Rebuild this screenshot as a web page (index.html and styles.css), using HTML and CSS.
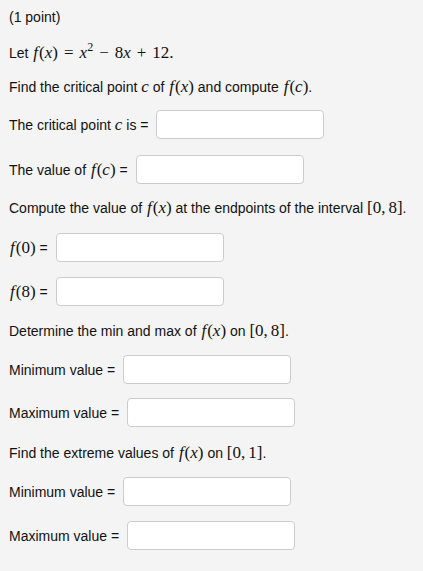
FILE: index.html
```html
<!DOCTYPE html>
<html>
<head>
<meta charset="utf-8">
<link rel="stylesheet" href="styles.css">
</head>
<body>
<div class="problem">
  <p class="txt">(1 point)</p>
  <p class="txt">Let <span class="m"><i class="f">f</i>(<i>x</i>)<span class="op">=</span><i>x</i><sup>2</sup><span class="op">−</span>8<i>x</i><span class="op">+</span>12.</span></p>
  <p class="txt">Find the critical point <span class="m"><i>c</i></span> of <span class="m"><i class="f">f</i>(<i>x</i>)</span> and compute <span class="m"><i class="f">f</i>(<i>c</i>)</span>.</p>
  <div class="row"><span class="lbl">The critical point <span class="m"><i>c</i></span> is =</span><span class="box"></span></div>
  <div class="row"><span class="lbl">The value of <span class="m"><i class="f">f</i>(<i>c</i>)</span> =</span><span class="box"></span></div>
  <p class="txt">Compute the value of <span class="m"><i class="f">f</i>(<i>x</i>)</span> at the endpoints of the interval <span class="m">[0,<span class="sp"></span>8]</span>.</p>
  <div class="row"><span class="lbl"><span class="m"><i class="f">f</i>(0)</span> =</span><span class="box"></span></div>
  <div class="row"><span class="lbl"><span class="m"><i class="f">f</i>(8)</span> =</span><span class="box"></span></div>
  <p class="txt">Determine the min and max of <span class="m"><i class="f">f</i>(<i>x</i>)</span> on <span class="m">[0,<span class="sp"></span>8]</span>.</p>
  <div class="row"><span class="lbl">Minimum value =</span><span class="box"></span></div>
  <div class="row"><span class="lbl">Maximum value =</span><span class="box"></span></div>
  <p class="txt">Find the extreme values of <span class="m"><i class="f">f</i>(<i>x</i>)</span> on <span class="m">[0,<span class="sp"></span>1]</span>.</p>
  <div class="row"><span class="lbl">Minimum value =</span><span class="box"></span></div>
  <div class="row"><span class="lbl">Maximum value =</span><span class="box"></span></div>
</div>
</body>
</html>
```
FILE: styles.css
```css
html, body {
  margin: 0;
  padding: 0;
  background: #f4f4f4;
}
body {
  font-family: "Liberation Sans", Arial, sans-serif;
  font-size: 14px;
  color: #111;
}
.problem {
  display: flex;
  flex-direction: column;
  align-items: flex-start;
  padding: 7px 9px 0 9px;
}
.txt {
  margin: 15px 0 0 0;
  height: 20px;
  line-height: 20px;
  white-space: nowrap;
}
.row {
  margin-top: 14px;
  height: 29px;
  display: flex;
  align-items: center;
  gap: 8px;
}
.problem > :nth-child(1) { margin-top: 0; }
.problem > :nth-child(2) { margin-top: 16px; }
.problem > :nth-child(3) { margin-top: 14px; }
.problem > :nth-child(4) { margin-top: 13px; }
.problem > :nth-child(5) { margin-top: 16px; }
.problem > :nth-child(6) { margin-top: 14px; }
.problem > :nth-child(7) { margin-top: 15px; }
.problem > :nth-child(8) { margin-top: 15px; }
.problem > :nth-child(9) { margin-top: 15px; }
.problem > :nth-child(10) { margin-top: 14px; }
.problem > :nth-child(11) { margin-top: 14px; }
.problem > :nth-child(12) { margin-top: 16px; }
.problem > :nth-child(13) { margin-top: 14px; }
.problem > :nth-child(14) { margin-top: 15px; }
.lbl {
  white-space: nowrap;
  line-height: 20px;
}
.box {
  display: block;
  width: 166px;
  height: 27px;
  background: #fff;
  border: 1px solid #cccccc;
  border-radius: 4px;
}
.m {
  font-family: "Liberation Serif", "Times New Roman", serif;
  font-size: 17px;
}
.m i {
  font-style: italic;
}
.m i.f {
  padding: 0 1px 0 1px;
}
.m sup {
  font-size: 12px;
  vertical-align: 7px;
  line-height: 0;
}
.op {
  margin: 0 6px;
}
.sp {
  display: inline-block;
  width: 3px;
}
```
